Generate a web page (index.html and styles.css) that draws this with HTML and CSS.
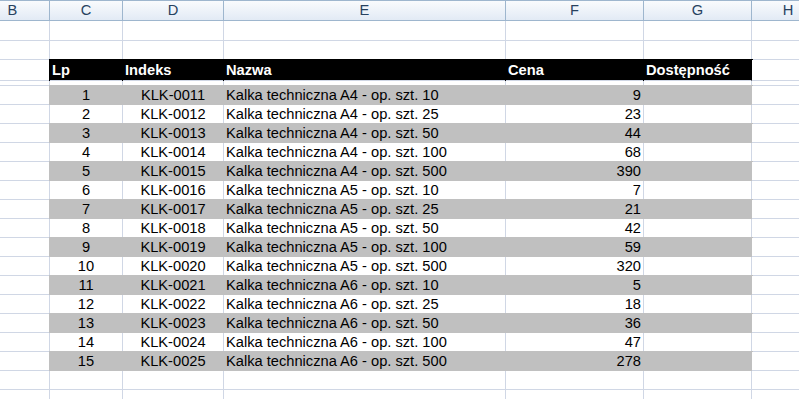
FILE: index.html
```html
<!DOCTYPE html>
<html lang="pl">
<head>
<meta charset="utf-8">
<title>Arkusz</title>
<link rel="stylesheet" href="styles.css">
</head>
<body>
<div class="sheet">
  <div class="row colhead">
    <div class="ch ch-b">B</div><div class="ch">C</div><div class="ch">D</div><div class="ch">E</div><div class="ch">F</div><div class="ch">G</div><div class="ch">H</div>
  </div>
  <div class="row r20"><div></div><div></div><div></div><div></div><div></div><div></div><div></div></div>
  <div class="row"><div></div><div></div><div></div><div></div><div></div><div></div><div></div></div>
  <div class="row thead">
    <div></div><div class="th">Lp</div><div class="th">Indeks</div><div class="th">Nazwa</div><div class="th">Cena</div><div class="th">Dostępność</div><div></div>
  </div>
  <div class="row thin"><div></div><div></div><div></div><div></div><div></div><div></div><div></div></div>

  <div class="row data odd"><div></div><div class="c">1</div><div class="c">KLK-0011</div><div>Kalka techniczna A4 - op. szt. 10</div><div class="r">9</div><div></div><div></div></div>
  <div class="row data"><div></div><div class="c">2</div><div class="c">KLK-0012</div><div>Kalka techniczna A4 - op. szt. 25</div><div class="r">23</div><div></div><div></div></div>
  <div class="row data odd"><div></div><div class="c">3</div><div class="c">KLK-0013</div><div>Kalka techniczna A4 - op. szt. 50</div><div class="r">44</div><div></div><div></div></div>
  <div class="row data"><div></div><div class="c">4</div><div class="c">KLK-0014</div><div>Kalka techniczna A4 - op. szt. 100</div><div class="r">68</div><div></div><div></div></div>
  <div class="row data odd"><div></div><div class="c">5</div><div class="c">KLK-0015</div><div>Kalka techniczna A4 - op. szt. 500</div><div class="r">390</div><div></div><div></div></div>
  <div class="row data"><div></div><div class="c">6</div><div class="c">KLK-0016</div><div>Kalka techniczna A5 - op. szt. 10</div><div class="r">7</div><div></div><div></div></div>
  <div class="row data odd"><div></div><div class="c">7</div><div class="c">KLK-0017</div><div>Kalka techniczna A5 - op. szt. 25</div><div class="r">21</div><div></div><div></div></div>
  <div class="row data"><div></div><div class="c">8</div><div class="c">KLK-0018</div><div>Kalka techniczna A5 - op. szt. 50</div><div class="r">42</div><div></div><div></div></div>
  <div class="row data odd"><div></div><div class="c">9</div><div class="c">KLK-0019</div><div>Kalka techniczna A5 - op. szt. 100</div><div class="r">59</div><div></div><div></div></div>
  <div class="row data"><div></div><div class="c">10</div><div class="c">KLK-0020</div><div>Kalka techniczna A5 - op. szt. 500</div><div class="r">320</div><div></div><div></div></div>
  <div class="row data odd"><div></div><div class="c">11</div><div class="c">KLK-0021</div><div>Kalka techniczna A6 - op. szt. 10</div><div class="r">5</div><div></div><div></div></div>
  <div class="row data"><div></div><div class="c">12</div><div class="c">KLK-0022</div><div>Kalka techniczna A6 - op. szt. 25</div><div class="r">18</div><div></div><div></div></div>
  <div class="row data odd"><div></div><div class="c">13</div><div class="c">KLK-0023</div><div>Kalka techniczna A6 - op. szt. 50</div><div class="r">36</div><div></div><div></div></div>
  <div class="row data"><div></div><div class="c">14</div><div class="c">KLK-0024</div><div>Kalka techniczna A6 - op. szt. 100</div><div class="r">47</div><div></div><div></div></div>
  <div class="row data odd"><div></div><div class="c">15</div><div class="c">KLK-0025</div><div>Kalka techniczna A6 - op. szt. 500</div><div class="r">278</div><div></div><div></div></div>

  <div class="row"><div></div><div></div><div></div><div></div><div></div><div></div><div></div></div>
  <div class="row"><div></div><div></div><div></div><div></div><div></div><div></div><div></div></div>
</div>
</body>
</html>
```

FILE: styles.css
```css
html, body {
  margin: 0;
  padding: 0;
  background: #ffffff;
  overflow: hidden;
}

.sheet {
  width: 824px;
  font-family: "Liberation Sans", Arial, sans-serif;
  font-size: 14.67px;
  color: #000000;
}

.row {
  display: grid;
  grid-template-columns: 50px 73px 101px 282px 138px 108px 73px;
  height: 19px;
}

.row > div {
  box-sizing: border-box;
  border-right: 1px solid #d0d7e5;
  border-bottom: 1px solid #d0d7e5;
  background: #ffffff;
  line-height: 18px;
  padding: 0 2px;
  white-space: nowrap;
  overflow: hidden;
}

.colhead {
  height: 21px;
}

.colhead > .ch {
  border-top: 1px solid #9eb6ce;
  border-right: 1px solid #9eb6ce;
  border-bottom: 1px solid #9eb6ce;
  background: linear-gradient(#f9fbfd, #e2eaf5);
  color: #27415f;
  text-align: center;
  line-height: 19px;
  padding: 0;
}

.colhead > .ch-b {
  padding-right: 24px;
}

.r20 {
  height: 20px;
}

.r20 > div {
  line-height: 19px;
}

.thead {
  height: 21px;
}

.thead > .th {
  background: #000000;
  border-right-color: #000000;
  box-shadow: 0 0 0 1px #000000;
  color: #ffffff;
  font-weight: bold;
  line-height: 19px;
  padding-top: 1px;
}

.thin {
  height: 5px;
}

.data > .c {
  text-align: center;
}

.data > .r {
  text-align: right;
}

.data > div:nth-child(n+2):nth-child(-n+6) {
  border-bottom-color: #ffffff;
}

.odd > div:nth-child(n+2):nth-child(-n+6) {
  background: #c0c0c0;
  border-right-color: #c0c0c0;
  border-bottom-color: #c0c0c0;
  box-shadow: 0 0 0 1px #c0c0c0;
}
```
